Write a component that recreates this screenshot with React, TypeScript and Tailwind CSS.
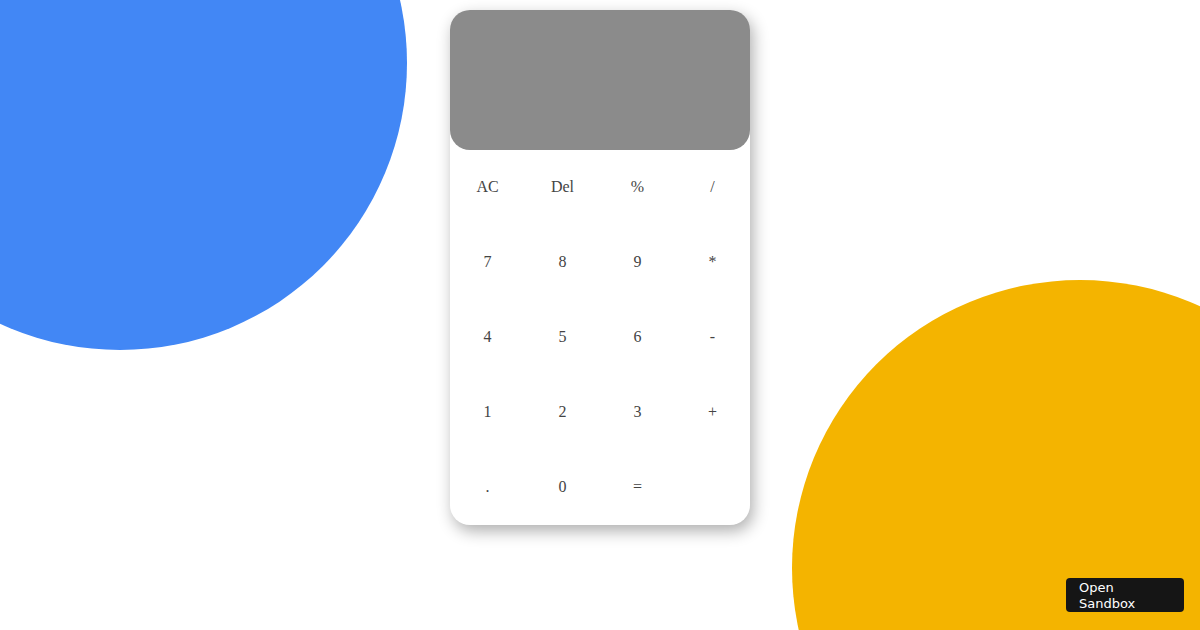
import React from "react";

const keys = ["AC", "Del", "%", "/", "7", "8", "9", "*", "4", "5", "6", "-", "1", "2", "3", "+", ".", "0", "="];

export default function App() {
  return (
    <div className="relative w-[1200px] h-[630px] overflow-hidden bg-white">
      {/* background circles */}
      <div className="absolute left-[-167px] top-[-224px] w-[574px] h-[574px] rounded-full bg-[#4287f5]" />
      <div className="absolute left-[792px] top-[280px] w-[576px] h-[576px] rounded-full bg-[#f4b400]" />

      <div className="relative flex justify-center pt-[10px]">
        <div className="w-[300px] bg-white rounded-[20px] shadow-[3px_6px_16px_rgba(0,0,0,0.32)]">
          <div className="h-[140px] rounded-[20px] bg-[#8b8b8b]" />
          <div className="grid grid-cols-4" style={{ fontFamily: '"Liberation Serif", serif' }}>
            {keys.map((k) => (
              <button key={k} className="h-[75px] pb-[2px] flex items-center justify-center text-[16px] text-[#444]">
                {k}
              </button>
            ))}
          </div>
        </div>
      </div>

      <button
        className="absolute right-[16px] bottom-[18px] w-[118px] h-[34px] rounded-[4px] bg-[#151515] text-white text-left text-[13px] leading-[16px] pl-[13px] pr-[30px] pt-[2px]"
        style={{ fontFamily: '"DejaVu Sans", sans-serif' }}
      >
        Open Sandbox
      </button>
    </div>
  );
}
